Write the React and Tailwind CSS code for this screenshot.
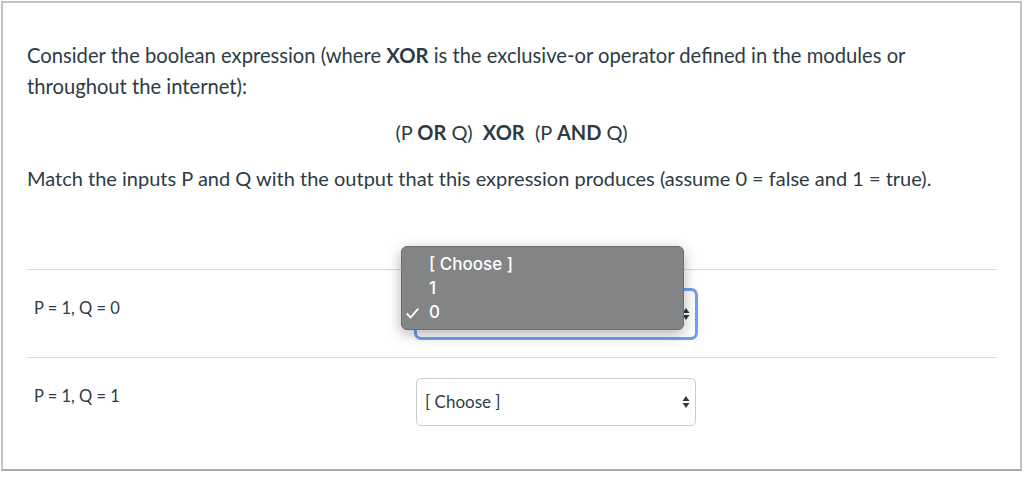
import React from 'react';

const ROWS = [
  { label: 'P = 1, Q = 0', focused: true },
  { label: 'P = 1, Q = 1', focused: false },
];

function Arrows() {
  return (
    <svg width="8" height="14" viewBox="0 0 8 14" className="shrink-0">
      <path d="M4 1 L7.5 6 L0.5 6 Z" fill="#2d3b45" />
      <path d="M4 13 L7.5 8 L0.5 8 Z" fill="#2d3b45" />
    </svg>
  );
}

function Check() {
  return (
    <svg width="13" height="11" viewBox="0 0 13 11" className="absolute left-[4px] top-[7px]">
      <path d="M1.2 6 L4.6 9.5 L11.8 1.2" fill="none" stroke="white" strokeWidth="1.8" strokeLinecap="round" strokeLinejoin="round" />
    </svg>
  );
}

function Select({ focused }) {
  return (
    <div className="relative">
      <div
        className={`w-[280px] h-[48px] rounded-[5px] bg-white flex items-center justify-between pl-[8px] pr-[5px] border border-[#c7cdd1] ${
          focused ? 'outline-[3px] outline-solid outline-[#6f9ff0] outline-offset-[-1px]' : ''
        }`}
      >
        <span className="text-[17px] text-[#2d3b45]">[ Choose ]</span>
        <Arrows />
      </div>
      {focused && (
        <div className="absolute left-[-15px] top-[-44px] w-[283px] h-[84px] rounded-[6px] bg-[#838485] border border-[#6d6e70] shadow-[0_4px_14px_rgba(0,0,0,0.3)] pt-[6px] text-white text-[17px] font-medium font-['Inter',sans-serif]">
          {['[ Choose ]', '1', '0'].map((o, i) => (
            <div key={o} className="h-[24px] flex items-center pl-[27px] relative">
              {i === 2 && <Check />}
              {o}
            </div>
          ))}
        </div>
      )}
    </div>
  );
}

export default function App() {
  return (
    <div className="w-[1024px] h-[479px] bg-white font-['Lato',sans-serif] text-[#2d3b45]">
      <div className="ml-px mt-px w-[1021px] h-[470px] border-2 border-[#c4c4c4] border-b-[#a9a9a9] pl-[24px] pr-[24px] pt-[37px]">
        <p className="text-[20.2px] leading-[31px] max-w-[930px]">
          Consider the boolean expression (where <b>XOR</b> is the exclusive-or operator defined in the modules or throughout the internet):
        </p>
        <p className="text-[20px] leading-[31px] text-center mt-[15px]">
          (P <b>OR</b> Q)&nbsp; <b>XOR</b>&nbsp; (P <b>AND</b> Q)
        </p>
        <p className="text-[20px] leading-[31px] mt-[15px]">
          Match the inputs P and Q with the output that this expression produces (assume 0 = false and 1 = true).
        </p>

        {/* answer rows */}
        <div className="mt-[75px]">
          {ROWS.map(r => (
            <div key={r.label} className="border-t border-[#d9d9d9] h-[88px] flex items-start">
              <div className="w-[389px] pl-[7px] pt-[26px] text-[16.5px]">{r.label}</div>
              <div className="pt-[20px]">
                <Select focused={r.focused} />
              </div>
            </div>
          ))}
        </div>
      </div>
    </div>
  );
}
